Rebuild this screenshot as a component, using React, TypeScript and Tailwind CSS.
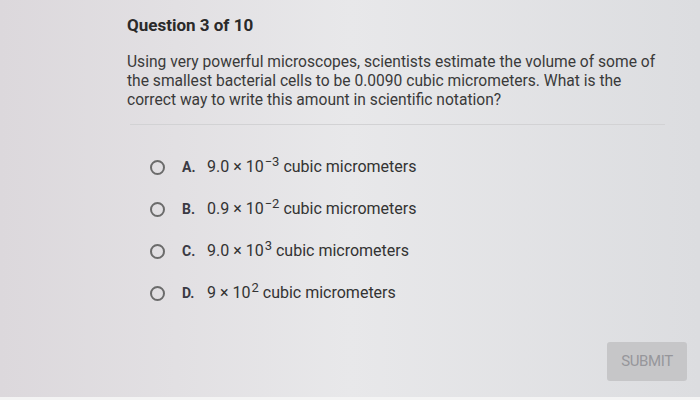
import React from "react";

interface Choice {
  letter: string;
  base: string;
  exp: string;
}

const choices: Choice[] = [
  { letter: "A.", base: "9.0 × 10", exp: "−3" },
  { letter: "B.", base: "0.9 × 10", exp: "−2" },
  { letter: "C.", base: "9.0 × 10", exp: "3" },
  { letter: "D.", base: "9 × 10", exp: "2" },
];

export default function App() {
  return (
    <div
      className="relative w-[700px] h-[400px] overflow-hidden bg-gradient-to-r from-[#dcd8dc] via-[#e8e8ea] to-[#dcdde0] text-[#333] flex flex-col"
      style={{ fontFamily: "Roboto, 'Liberation Sans', sans-serif" }}
    >
      <div className="pl-[127px] pt-[14px]">
        <h1 className="text-[17px] font-bold text-[#2a2a2a] leading-[22px]">
          Question 3 of 10
        </h1>
        <p className="mt-[17px] w-[540px] text-[15.6px] leading-[19px] text-[#3a3a3a]">
          Using very powerful microscopes, scientists estimate the volume of
          some of the smallest bacterial cells to be 0.0090 cubic micrometers.
          What is the correct way to write this amount in scientific notation?
        </p>
      </div>
      <div className="ml-[130px] mt-[14px] w-[535px] h-px bg-[#d2d2d4]" />
      <div className="pl-[150px] pt-[32px] flex flex-col gap-[22px]">
        {choices.map((c) => (
          <div key={c.letter} className="flex items-center h-[20px]">
            <span className="w-[15px] h-[15px] rounded-full border-2 border-[#6b6b6b]" />
            <span className="ml-[17px] w-[25px] text-[14px] font-bold text-[#3a3a44]">
              {c.letter}
            </span>
            <span className="text-[16px] text-[#333]">
              {c.base}
              <sup className="text-[13px] ml-[1px] mr-[4px]">{c.exp}</sup>
              cubic micrometers
            </span>
          </div>
        ))}
      </div>
      <div className="absolute left-[607px] top-[342px] w-[80px] h-[39px] rounded-[3px] bg-[#c6c6c8] flex items-center justify-center text-[15px] text-[#96969b] tracking-tight">
        SUBMIT
      </div>
      <div className="absolute left-0 bottom-0 w-full h-[3px] bg-[#f4f4f4]" />
    </div>
  );
}
